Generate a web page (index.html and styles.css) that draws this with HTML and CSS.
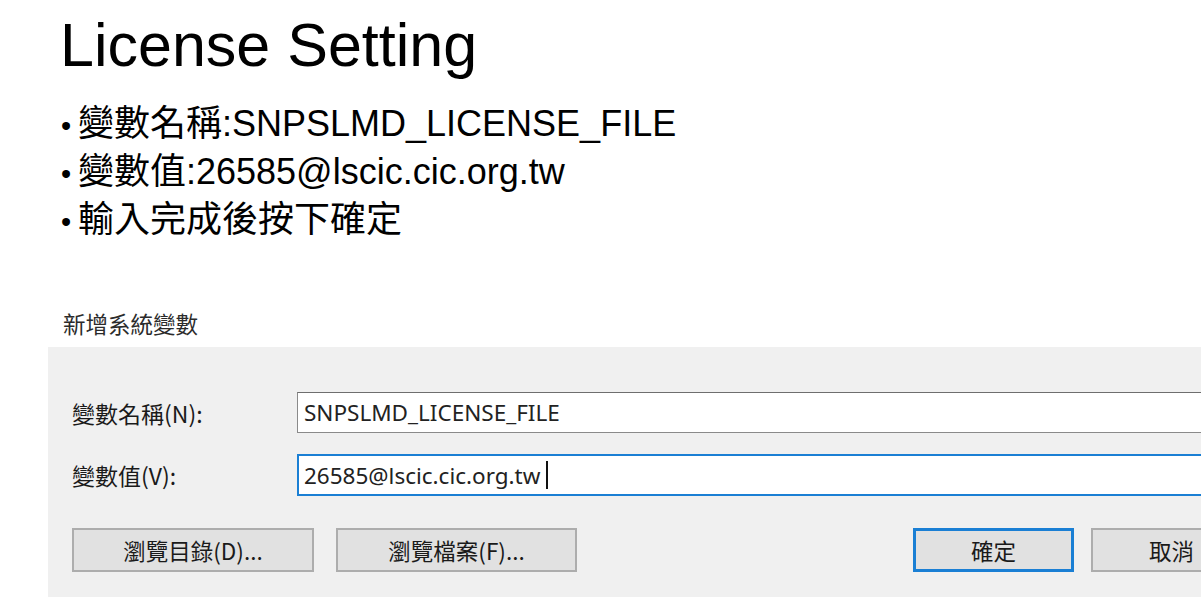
FILE: index.html
```html
<!DOCTYPE html>
<html lang="zh-Hant">
<head>
<meta charset="utf-8">
<title>License Setting</title>
<link rel="stylesheet" href="styles.css">
</head>
<body>
<div class="slide">
  <h1 class="title">License Setting</h1>
  <ul class="points">
    <li>變數名稱:SNPSLMD_LICENSE_FILE</li>
    <li>變數值:26585@lscic.cic.org.tw</li>
    <li>輸入完成後按下確定</li>
  </ul>
  <div class="dlg-title">新增系統變數</div>
  <div class="dialog">
    <div class="row">
      <div class="label">變數名稱(N):</div>
      <div class="field">SNPSLMD_LICENSE_FILE</div>
    </div>
    <div class="row row-2">
      <div class="label">變數值(V):</div>
      <div class="field focused">26585@lscic.cic.org.tw<span class="caret"></span></div>
    </div>
    <div class="buttons">
      <div class="btn btn-wide">瀏覽目錄(D)...</div>
      <div class="btn btn-wide">瀏覽檔案(F)...</div>
      <div class="spacer"></div>
      <div class="btn btn-ok">確定</div>
      <div class="btn btn-cancel">取消</div>
    </div>
  </div>
</div>
</body>
</html>
```
FILE: styles.css
```css
html, body {
  margin: 0;
  padding: 0;
  background: #ffffff;
  overflow: hidden;
}

body {
  width: 1201px;
  height: 610px;
}

.slide {
  width: 1201px;
  height: 610px;
  overflow: hidden;
}

.title {
  margin: 0;
  padding: 10px 0 0 60px;
  font-family: "Liberation Sans", "Noto Sans CJK TC", sans-serif;
  font-weight: 400;
  font-size: 61px;
  line-height: 70px;
  color: #000;
}

.points {
  list-style: none;
  margin: 20px 0 0 0;
  padding: 0 0 0 60px;
  font-family: "Liberation Sans", "Noto Sans CJK TC", sans-serif;
  font-size: 36px;
  line-height: 48px;
  color: #000;
}

.points li {
  height: 48px;
}

.points li::before {
  content: "\2022";
  display: inline-block;
  width: 17px;
  padding-left: 1px;
  font-size: 29px;
  line-height: 1;
}

.dlg-title {
  margin: 65px 0 0 63px;
  font-family: "Noto Sans CJK TC", sans-serif;
  font-size: 22.5px;
  line-height: 28px;
  color: #2b2b2b;
}

.dialog {
  margin: 10px 0 0 48px;
  width: 1228px;
  height: 250px;
  box-sizing: border-box;
  padding: 45px 24px 0 24px;
  background: #f0f0f0;
  font-family: "Noto Sans", "Noto Sans CJK TC", sans-serif;
  color: #1a1a1a;
}

.row {
  display: flex;
  align-items: center;
  height: 41px;
}

.row-2 {
  margin-top: 21px;
  height: 42px;
}

.label {
  width: 225px;
  flex: none;
  font-family: "Noto Sans CJK TC", sans-serif;
  font-size: 23px;
}

.field {
  flex: 1;
  height: 100%;
  box-sizing: border-box;
  display: flex;
  align-items: center;
  padding-left: 6px;
  background: #ffffff;
  border: 1px solid #8a8a8a;
  border-top-color: #6e6e6e;
  font-size: 22.5px;
  color: #222;
}

.field.focused {
  border: 2px solid #1a7fd4;
  padding-left: 5px;
}

.caret {
  display: inline-block;
  width: 0;
  height: 28px;
  margin-left: 6px;
  border-left: 2px solid #111;
}

.buttons {
  display: flex;
  align-items: center;
  margin-top: 32px;
  gap: 22px;
}

.spacer {
  flex: 1;
}

.btn {
  height: 44px;
  box-sizing: border-box;
  display: flex;
  align-items: center;
  justify-content: center;
  background: #e1e1e1;
  border: 2px solid #adadad;
  font-family: "Noto Sans CJK TC", sans-serif;
  font-size: 22.5px;
  color: #1a1a1a;
}

.btn-wide {
  width: 242px;
}

.btn-wide + .btn-wide {
  width: 241px;
}

.btn-ok {
  width: 161px;
  border: 3px solid #1a7fd4;
}

.btn-cancel {
  width: 161px;
  margin-left: -5px;
}
```
